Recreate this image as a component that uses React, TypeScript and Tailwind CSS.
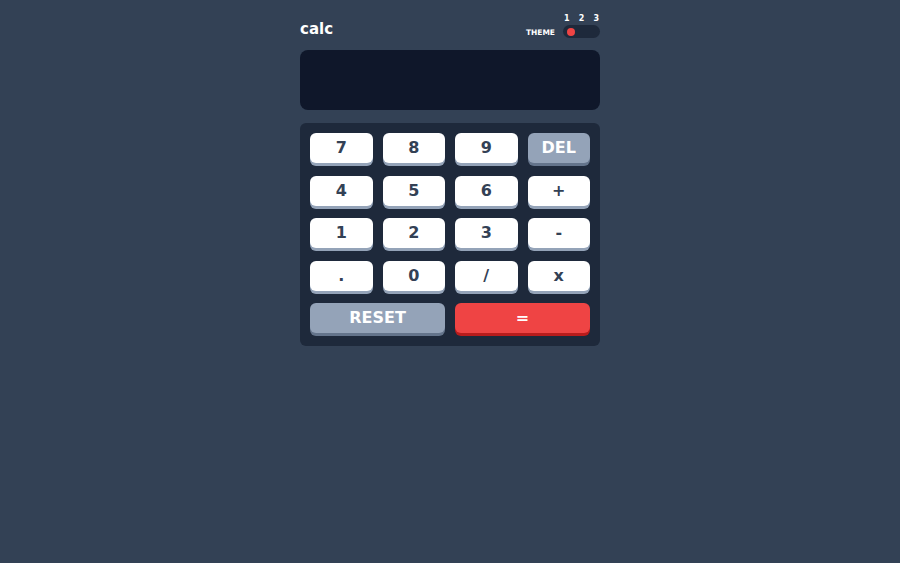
import React from 'react'

// Teclas del calculador, fila por fila
const rows: { label: string; kind: 'num' | 'del' }[][] = [
  [{ label: '7', kind: 'num' }, { label: '8', kind: 'num' }, { label: '9', kind: 'num' }, { label: 'DEL', kind: 'del' }],
  [{ label: '4', kind: 'num' }, { label: '5', kind: 'num' }, { label: '6', kind: 'num' }, { label: '+', kind: 'num' }],
  [{ label: '1', kind: 'num' }, { label: '2', kind: 'num' }, { label: '3', kind: 'num' }, { label: '-', kind: 'num' }],
  [{ label: '.', kind: 'num' }, { label: '0', kind: 'num' }, { label: '/', kind: 'num' }, { label: 'x', kind: 'num' }],
]

const font = { fontFamily: '"DejaVu Sans", Verdana, sans-serif' }

function Key({ label, kind }: { label: string; kind: 'num' | 'del' }) {
  const cls =
    kind === 'del'
      ? 'bg-[#94a3b8] text-white shadow-[0_3px_0_#64748b]'
      : 'bg-white text-[#334155] shadow-[0_3px_0_#94a3b8]'
  return (
    <button
      type="button"
      className={`h-[30px] mb-[2.5px] rounded-md flex items-center justify-center text-[16px] font-bold ${cls}`}
    >
      {label}
    </button>
  )
}

export default function App() {
  return (
    <div className="min-h-[563px] bg-[#334155]" style={font}>
      <div className="w-[300px] mx-auto pt-[12px]">
        {/* Header */}
        <div className="flex justify-between items-end h-[26px]">
          <h1 className="text-[15px] leading-[24px] font-bold text-white mb-[-3px]">calc</h1>
          <div className="flex items-end gap-[8px]">
            <span className="text-[7.5px] leading-[12px] font-bold text-white mb-[-1px]">THEME</span>
            <div className="flex flex-col">
              <div className="flex justify-between px-[1px] text-[8px] leading-[12px] font-bold text-white">
                <span>1</span>
                <span>2</span>
                <span>3</span>
              </div>
              <div className="w-[37px] h-[13px] rounded-full bg-[#1e293b] flex items-center px-[4px]">
                <div className="w-[8px] h-[8px] rounded-full bg-[#ef4444]" />
              </div>
            </div>
          </div>
        </div>

        {/* Pantalla */}
        <div className="mt-[12px] h-[60px] rounded-lg bg-[#0f172a]" />

        {/* Teclado */}
        <div className="mt-[13px] rounded-md bg-[#1e293b] p-[10px] flex flex-col gap-[10px]">
          {rows.map((row, i) => (
            <div key={i} className="grid grid-cols-4 gap-[10px]">
              {row.map((k) => (
                <Key key={k.label} label={k.label} kind={k.kind} />
              ))}
            </div>
          ))}
          <div className="grid grid-cols-2 gap-[10px]">
            <button
              type="button"
              className="h-[30px] mb-[2.5px] rounded-md bg-[#94a3b8] text-white text-[16px] font-bold shadow-[0_3px_0_#64748b]"
            >
              RESET
            </button>
            <button
              type="button"
              className="h-[30px] mb-[2.5px] rounded-md bg-[#ef4444] text-white text-[16px] font-bold shadow-[0_3px_0_#b91c1c]"
            >
              =
            </button>
          </div>
        </div>
      </div>
    </div>
  )
}
